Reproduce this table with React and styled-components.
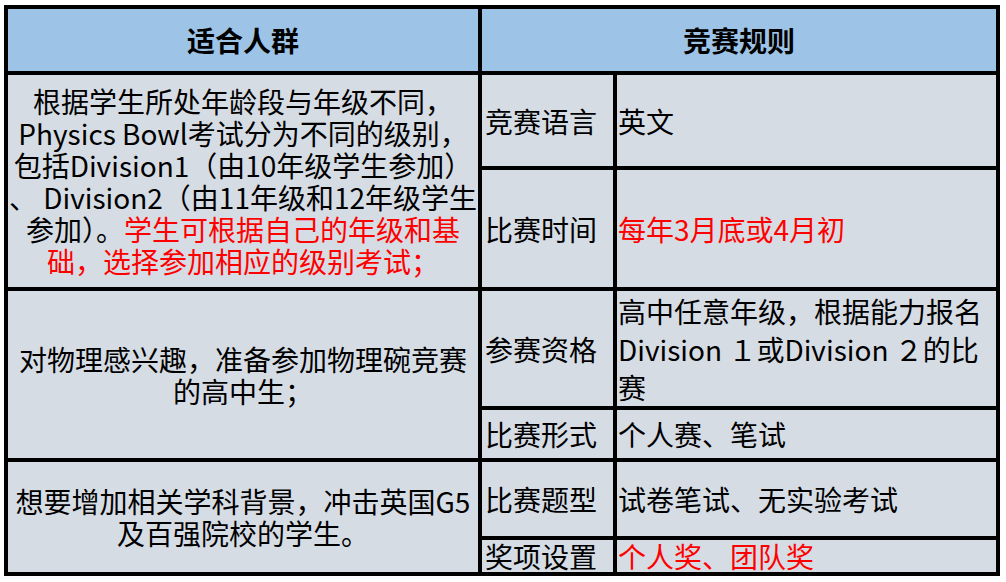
import React from "react";
import styled, { createGlobalStyle } from "styled-components";

const GlobalStyle = createGlobalStyle`
  html, body {
    margin: 0;
    padding: 0;
    background: #ffffff;
  }
  body {
    font-family: "Noto Sans CJK SC", "Noto Sans", sans-serif;
    color: #000000;
  }
`;

const TableGrid = styled.div`
  display: grid;
  grid-template-columns: 470px 131px 379px;
  grid-template-rows: 62px 91px 117px 115px 48px 74px 32px;
  gap: 4px;
  padding: 4px;
  margin: 5px 0 0 4px;
  width: max-content;
  background: #000000;
`;

const HeadCell = styled.div`
  grid-column: ${(p) => p.$cols || "auto"};
  display: flex;
  align-items: center;
  justify-content: center;
  background: #9dc3e6;
  font-size: 28px;
  font-weight: 700;
  line-height: 32px;
`;

const GroupCell = styled.div`
  grid-column: 1;
  grid-row: ${(p) => p.$rows};
  display: flex;
  flex-direction: column;
  align-items: center;
  justify-content: center;
  background: #d6dce4;
  font-size: 28px;
  line-height: 32px;
  overflow: hidden;
`;

const Line = styled.div`
  white-space: nowrap;
  text-align: center;
`;

const LabelCell = styled.div`
  display: flex;
  align-items: center;
  padding: 0 3px;
  background: #d6dce4;
  font-size: 28px;
  line-height: 32px;
  white-space: nowrap;
  overflow: hidden;
`;

const ValueCell = styled.div`
  display: flex;
  flex-direction: column;
  justify-content: ${(p) => (p.$top ? "flex-start" : "center")};
  padding: ${(p) => (p.$top ? "1px 1px 0" : "0 1px")};
  background: #d6dce4;
  font-size: 28px;
  line-height: ${(p) => (p.$top ? "38px" : "32px")};
  color: ${(p) => (p.$red ? "#ff0000" : "#000000")};
  white-space: nowrap;
  overflow: hidden;
`;

const Red = styled.span`
  color: #ff0000;
`;

const rules = [
  { label: "竞赛语言", value: ["英文"] },
  { label: "比赛时间", value: ["每年3月底或4月初"], red: true },
  {
    label: "参赛资格",
    value: ["高中任意年级，根据能力报名", "Division １或Division ２的比", "赛"],
    top: true,
  },
  { label: "比赛形式", value: ["个人赛、笔试"] },
  { label: "比赛题型", value: ["试卷笔试、无实验考试"] },
  { label: "奖项设置", value: ["个人奖、团队奖"], red: true },
];

export default function App() {
  const ruleCells = rules.map((r) => (
    <React.Fragment key={r.label}>
      <LabelCell>{r.label}</LabelCell>
      <ValueCell $red={r.red} $top={r.top}>
        {r.value.map((v) => (
          <div key={v}>{v}</div>
        ))}
      </ValueCell>
    </React.Fragment>
  ));

  return (
    <>
      <GlobalStyle />
      <TableGrid>
        <HeadCell $cols="1">适合人群</HeadCell>
        <HeadCell $cols="2 / 4">竞赛规则</HeadCell>

        <GroupCell $rows="2 / 4">
          <Line>根据学生所处年龄段与年级不同，</Line>
          <Line>Physics Bowl考试分为不同的级别，</Line>
          <Line>包括Division1（由10年级学生参加）</Line>
          <Line>、 Division2（由11年级和12年级学生</Line>
          <Line>
            参加）。<Red>学生可根据自己的年级和基</Red>
          </Line>
          <Line>
            <Red>础，选择参加相应的级别考试；</Red>
          </Line>
        </GroupCell>
        {ruleCells.slice(0, 2)}

        <GroupCell $rows="4 / 6">
          <Line>对物理感兴趣，准备参加物理碗竞赛</Line>
          <Line>的高中生；</Line>
        </GroupCell>
        {ruleCells.slice(2, 4)}

        <GroupCell $rows="6 / 8">
          <Line>想要增加相关学科背景，冲击英国G5</Line>
          <Line>及百强院校的学生。</Line>
        </GroupCell>
        {ruleCells.slice(4, 6)}
      </TableGrid>
    </>
  );
}
